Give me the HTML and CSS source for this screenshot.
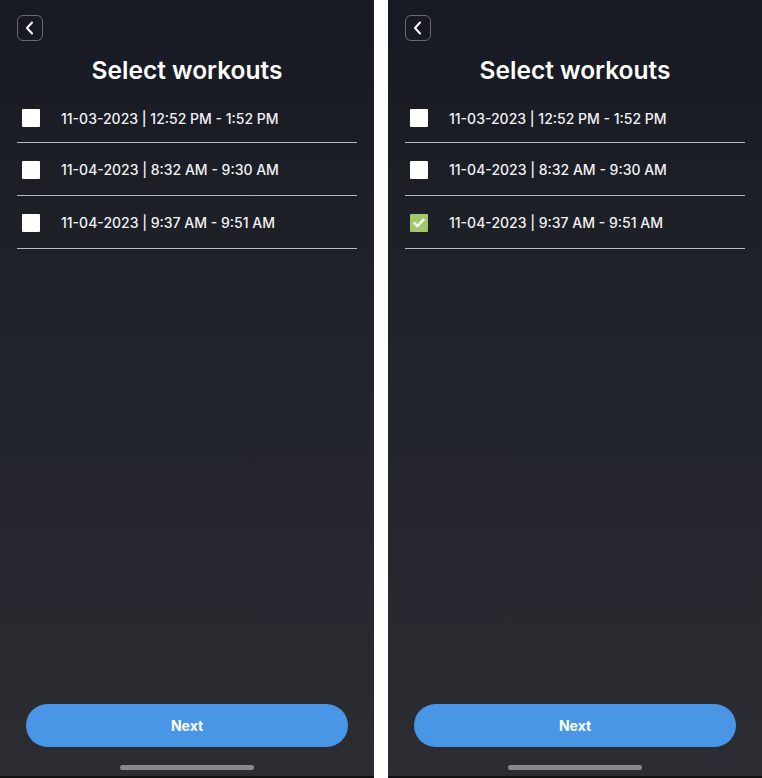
FILE: index.html
```html
<!DOCTYPE html>
<html lang="en">
<head>
  <meta charset="UTF-8" />
  <meta name="viewport" content="width=device-width, initial-scale=1.0"/>
  <title>Select workouts</title>
  <link rel="stylesheet" href="styles.css">
</head>
<body>
  <div class="screens">
    <div class="screen">
      <div class="top-bar">
        <button class="back-btn">
          <svg width="12" height="14" viewBox="0 0 12 14"><path d="M8 1.5 L3 7 L8 12.5" fill="none" stroke="#fff" stroke-width="2" stroke-linecap="round" stroke-linejoin="round"/></svg>
        </button>
      </div>
      <h1>Select workouts</h1>
      <div class="workout-list">
        <label class="workout-row"><span class="check"></span>11-03-2023 | 12:52 PM - 1:52 PM</label>
        <label class="workout-row"><span class="check"></span>11-04-2023 | 8:32 AM - 9:30 AM</label>
        <label class="workout-row"><span class="check"></span>11-04-2023 | 9:37 AM - 9:51 AM</label>
      </div>
      <div class="bottom">
        <button class="next-btn">Next</button>
        <div class="home-bar"></div>
      </div>
    </div>

    <div class="screen">
      <div class="top-bar">
        <button class="back-btn">
          <svg width="12" height="14" viewBox="0 0 12 14"><path d="M8 1.5 L3 7 L8 12.5" fill="none" stroke="#fff" stroke-width="2" stroke-linecap="round" stroke-linejoin="round"/></svg>
        </button>
      </div>
      <h1>Select workouts</h1>
      <div class="workout-list">
        <label class="workout-row"><span class="check"></span>11-03-2023 | 12:52 PM - 1:52 PM</label>
        <label class="workout-row"><span class="check"></span>11-04-2023 | 8:32 AM - 9:30 AM</label>
        <label class="workout-row"><span class="check checked">
          <svg width="12" height="10" viewBox="0 0 12 10"><path d="M1.5 5.2 L4.5 8 L10.5 1.8" fill="none" stroke="#fff" stroke-width="2.4" stroke-linecap="round" stroke-linejoin="round"/></svg>
        </span>11-04-2023 | 9:37 AM - 9:51 AM</label>
      </div>
      <div class="bottom">
        <button class="next-btn">Next</button>
        <div class="home-bar"></div>
      </div>
    </div>
  </div>
</body>
</html>
```

FILE: styles.css
```css
:root {
  --blue: #4a96e6;
  --green: #a3c76c;
  --line: #b9b9bc;
  --text: #f2f2f4;
}

* {
  box-sizing: border-box;
}

body {
  margin: 0;
  background: #fff;
  font-family: Inter, "Noto Sans", sans-serif;
  color: var(--text);
}

.screens {
  display: flex;
  gap: 14px;
}

.screen {
  width: 374px;
  height: 778px;
  display: flex;
  flex-direction: column;
  padding: 0 17px;
  background: linear-gradient(180deg, #171a22 0%, #22242b 50%, #2c2d33 100%);
  border-bottom: 2px solid #111;
}

.top-bar {
  padding-top: 15px;
  height: 41px;
}

.back-btn {
  width: 26px;
  height: 26px;
  padding: 0;
  display: flex;
  align-items: center;
  justify-content: center;
  background: transparent;
  border: 1px solid #6a6b70;
  border-radius: 6px;
}

h1 {
  margin: 14px 0 0;
  font-size: 24.5px;
  font-weight: 600;
  line-height: 30px;
  text-align: center;
  color: #fff;
}

.workout-list {
  margin-top: 8px;
}

.workout-row {
  display: flex;
  align-items: center;
  gap: 21px;
  height: 53px;
  padding-left: 5px;
  padding-top: 1px;
  font-size: 14px;
  font-weight: 500;
  border-bottom: 1.5px solid var(--line);
}

.workout-row:first-child {
  height: 50px;
}

.check {
  width: 18px;
  height: 18px;
  background: #fff;
  border-radius: 1px;
  display: flex;
  align-items: center;
  justify-content: center;
}

.check.checked {
  background: var(--green);
}

.bottom {
  margin-top: auto;
  display: flex;
  flex-direction: column;
  align-items: center;
}

.next-btn {
  width: 322px;
  height: 43px;
  border: none;
  border-radius: 22px;
  background: var(--blue);
  color: #fff;
  font-family: Inter, sans-serif;
  font-size: 14px;
  font-weight: 700;
}

.home-bar {
  width: 134px;
  height: 5px;
  margin: 18px 0 6px;
  border-radius: 3px;
  background: #8a8a8d;
}
```
